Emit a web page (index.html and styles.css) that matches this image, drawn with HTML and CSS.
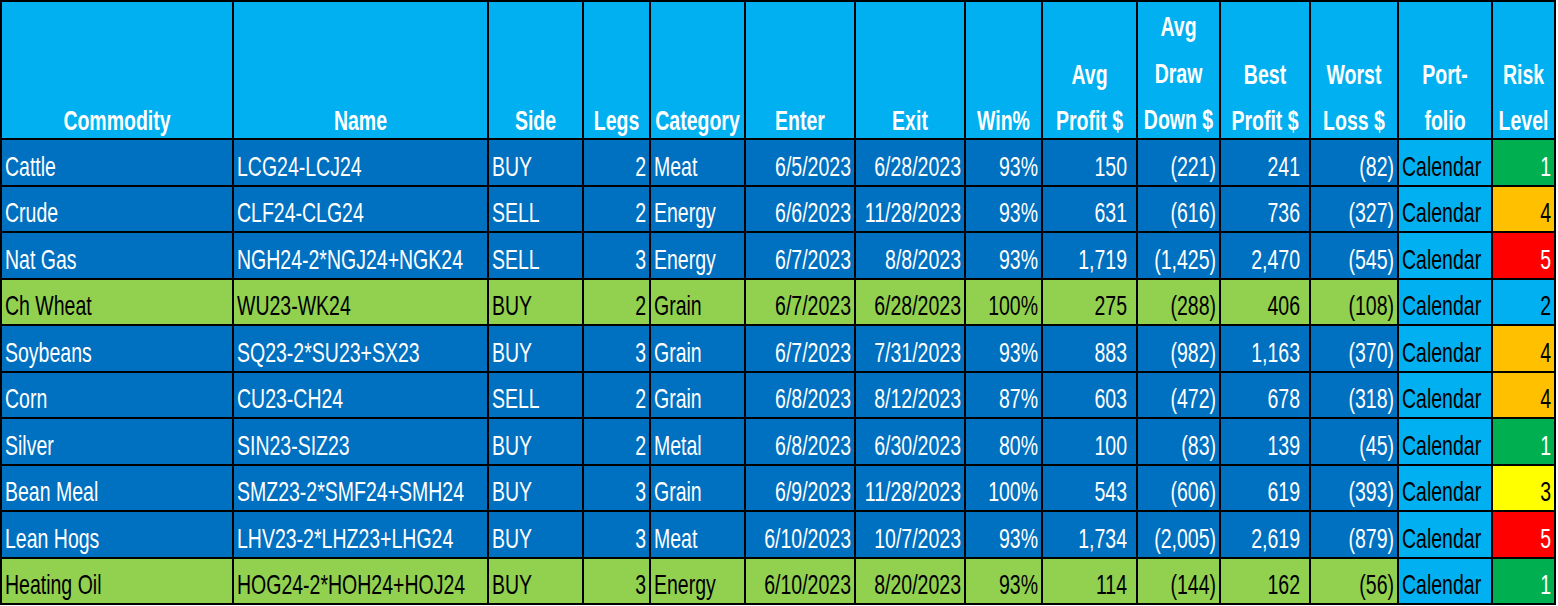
FILE: index.html
```html
<!DOCTYPE html>
<html>
<head>
<meta charset="utf-8">
<link rel="stylesheet" href="styles.css">
</head>
<body>
<table class="grid">
  <colgroup>
    <col class="c-commodity"><col class="c-name"><col class="c-side"><col class="c-legs"><col class="c-cat">
    <col class="c-enter"><col class="c-exit"><col class="c-win"><col class="c-profit"><col class="c-draw">
    <col class="c-best"><col class="c-worst"><col class="c-pf"><col class="c-risk">
  </colgroup>
  <thead>
    <tr>
      <th><div class="hd">Commodity</div></th>
      <th><div class="hd">Name</div></th>
      <th><div class="hd">Side</div></th>
      <th><div class="hd">Legs</div></th>
      <th><div class="hd">Category</div></th>
      <th><div class="hd">Enter</div></th>
      <th><div class="hd">Exit</div></th>
      <th><div class="hd">Win%</div></th>
      <th><div class="hd">Avg<br>Profit $</div></th>
      <th><div class="hd">Avg<br>Draw<br>Down $</div></th>
      <th><div class="hd">Best<br>Profit $</div></th>
      <th><div class="hd">Worst<br>Loss $</div></th>
      <th><div class="hd">Port-<br>folio</div></th>
      <th><div class="hd">Risk<br>Level</div></th>
    </tr>
  </thead>
  <tbody>
    <tr class="blue">
      <td><span>Cattle</span></td><td><span>LCG24-LCJ24</span></td><td><span>BUY</span></td><td class="r"><span>2</span></td><td><span>Meat</span></td>
      <td class="r"><span>6/5/2023</span></td><td class="r"><span>6/28/2023</span></td><td class="r"><span>93%</span></td>
      <td class="r pos"><span>150</span></td><td class="r"><span>(221)</span></td><td class="r pos"><span>241</span></td><td class="r"><span>(82)</span></td>
      <td class="pf"><span>Calendar</span></td><td class="r risk1"><span>1</span></td>
    </tr>
    <tr class="blue">
      <td><span>Crude</span></td><td><span>CLF24-CLG24</span></td><td><span>SELL</span></td><td class="r"><span>2</span></td><td><span>Energy</span></td>
      <td class="r"><span>6/6/2023</span></td><td class="r"><span>11/28/2023</span></td><td class="r"><span>93%</span></td>
      <td class="r pos"><span>631</span></td><td class="r"><span>(616)</span></td><td class="r pos"><span>736</span></td><td class="r"><span>(327)</span></td>
      <td class="pf"><span>Calendar</span></td><td class="r risk4"><span>4</span></td>
    </tr>
    <tr class="blue">
      <td><span>Nat Gas</span></td><td><span>NGH24-2*NGJ24+NGK24</span></td><td><span>SELL</span></td><td class="r"><span>3</span></td><td><span>Energy</span></td>
      <td class="r"><span>6/7/2023</span></td><td class="r"><span>8/8/2023</span></td><td class="r"><span>93%</span></td>
      <td class="r pos"><span>1,719</span></td><td class="r"><span>(1,425)</span></td><td class="r pos"><span>2,470</span></td><td class="r"><span>(545)</span></td>
      <td class="pf"><span>Calendar</span></td><td class="r risk5"><span>5</span></td>
    </tr>
    <tr class="green">
      <td><span>Ch Wheat</span></td><td><span>WU23-WK24</span></td><td><span>BUY</span></td><td class="r"><span>2</span></td><td><span>Grain</span></td>
      <td class="r"><span>6/7/2023</span></td><td class="r"><span>6/28/2023</span></td><td class="r"><span>100%</span></td>
      <td class="r pos"><span>275</span></td><td class="r"><span>(288)</span></td><td class="r pos"><span>406</span></td><td class="r"><span>(108)</span></td>
      <td class="pf"><span>Calendar</span></td><td class="r risk2"><span>2</span></td>
    </tr>
    <tr class="blue">
      <td><span>Soybeans</span></td><td><span>SQ23-2*SU23+SX23</span></td><td><span>BUY</span></td><td class="r"><span>3</span></td><td><span>Grain</span></td>
      <td class="r"><span>6/7/2023</span></td><td class="r"><span>7/31/2023</span></td><td class="r"><span>93%</span></td>
      <td class="r pos"><span>883</span></td><td class="r"><span>(982)</span></td><td class="r pos"><span>1,163</span></td><td class="r"><span>(370)</span></td>
      <td class="pf"><span>Calendar</span></td><td class="r risk4"><span>4</span></td>
    </tr>
    <tr class="blue">
      <td><span>Corn</span></td><td><span>CU23-CH24</span></td><td><span>SELL</span></td><td class="r"><span>2</span></td><td><span>Grain</span></td>
      <td class="r"><span>6/8/2023</span></td><td class="r"><span>8/12/2023</span></td><td class="r"><span>87%</span></td>
      <td class="r pos"><span>603</span></td><td class="r"><span>(472)</span></td><td class="r pos"><span>678</span></td><td class="r"><span>(318)</span></td>
      <td class="pf"><span>Calendar</span></td><td class="r risk4"><span>4</span></td>
    </tr>
    <tr class="blue">
      <td><span>Silver</span></td><td><span>SIN23-SIZ23</span></td><td><span>BUY</span></td><td class="r"><span>2</span></td><td><span>Metal</span></td>
      <td class="r"><span>6/8/2023</span></td><td class="r"><span>6/30/2023</span></td><td class="r"><span>80%</span></td>
      <td class="r pos"><span>100</span></td><td class="r"><span>(83)</span></td><td class="r pos"><span>139</span></td><td class="r"><span>(45)</span></td>
      <td class="pf"><span>Calendar</span></td><td class="r risk1"><span>1</span></td>
    </tr>
    <tr class="blue">
      <td><span>Bean Meal</span></td><td><span>SMZ23-2*SMF24+SMH24</span></td><td><span>BUY</span></td><td class="r"><span>3</span></td><td><span>Grain</span></td>
      <td class="r"><span>6/9/2023</span></td><td class="r"><span>11/28/2023</span></td><td class="r"><span>100%</span></td>
      <td class="r pos"><span>543</span></td><td class="r"><span>(606)</span></td><td class="r pos"><span>619</span></td><td class="r"><span>(393)</span></td>
      <td class="pf"><span>Calendar</span></td><td class="r risk3"><span>3</span></td>
    </tr>
    <tr class="blue">
      <td><span>Lean Hogs</span></td><td><span>LHV23-2*LHZ23+LHG24</span></td><td><span>BUY</span></td><td class="r"><span>3</span></td><td><span>Meat</span></td>
      <td class="r"><span>6/10/2023</span></td><td class="r"><span>10/7/2023</span></td><td class="r"><span>93%</span></td>
      <td class="r pos"><span>1,734</span></td><td class="r"><span>(2,005)</span></td><td class="r pos"><span>2,619</span></td><td class="r"><span>(879)</span></td>
      <td class="pf"><span>Calendar</span></td><td class="r risk5"><span>5</span></td>
    </tr>
    <tr class="green">
      <td><span>Heating Oil</span></td><td><span>HOG24-2*HOH24+HOJ24</span></td><td><span>BUY</span></td><td class="r"><span>3</span></td><td><span>Energy</span></td>
      <td class="r"><span>6/10/2023</span></td><td class="r"><span>8/20/2023</span></td><td class="r"><span>93%</span></td>
      <td class="r pos"><span>114</span></td><td class="r"><span>(144)</span></td><td class="r pos"><span>162</span></td><td class="r"><span>(56)</span></td>
      <td class="pf"><span>Calendar</span></td><td class="r risk1"><span>1</span></td>
    </tr>
  </tbody>
</table>
</body>
</html>
```

FILE: styles.css
```css
html, body {
  margin: 0;
  padding: 0;
  background: #ffffff;
}

.grid {
  border-collapse: collapse;
  table-layout: fixed;
  width: 1554px;
  font-family: "Liberation Sans", Arial, sans-serif;
  font-size: 19.5px;
  margin: 0;
}

.c-commodity { width: 232px; }
.c-name { width: 255px; }
.c-side { width: 95px; }
.c-legs { width: 67px; }
.c-cat { width: 95px; }
.c-enter { width: 110px; }
.c-exit { width: 110px; }
.c-win { width: 77px; }
.c-profit { width: 95px; }
.c-draw { width: 83px; }
.c-best { width: 90px; }
.c-worst { width: 88px; }
.c-pf { width: 94px; }
.c-risk { width: 63px; }

.grid th,
.grid td {
  border: 2px solid #000000;
  padding: 0 3px 3px 3px;
  vertical-align: bottom;
  white-space: nowrap;
  overflow: hidden;
}

.grid thead tr {
  height: 138px;
}

.grid th {
  background: #00b0f0;
  color: #ffffff;
  font-weight: bold;
  text-align: center;
  padding: 0 2px;
}

/* Excel text is drawn tall and narrow: stretch glyphs vertically */
.hd {
  line-height: 33.2px;
  margin-bottom: -6px;
  transform: scaleY(1.4);
  transform-origin: 50% 100%;
}

.grid tbody tr {
  height: 46.5px;
}

.grid td {
  line-height: 22px;
  text-align: left;
}

.grid td span {
  display: inline-block;
  transform: scaleY(1.4);
  transform-origin: 50% 100%;
}

.blue td {
  background: #0070c0;
  color: #ffffff;
}

.green td {
  background: #92d050;
  color: #000000;
}

.grid td.r {
  text-align: right;
}

.grid td.pos {
  padding-right: 9px;
}

.grid td.pf {
  background: #00b0f0;
  color: #000000;
}

.grid td.risk1 {
  background: #00b050;
  color: #ffffff;
}

.grid td.risk2 {
  background: #00b0f0;
  color: #000000;
}

.grid td.risk3 {
  background: #ffff00;
  color: #000000;
}

.grid td.risk4 {
  background: #ffc000;
  color: #000000;
}

.grid td.risk5 {
  background: #ff0000;
  color: #ffffff;
}
```
